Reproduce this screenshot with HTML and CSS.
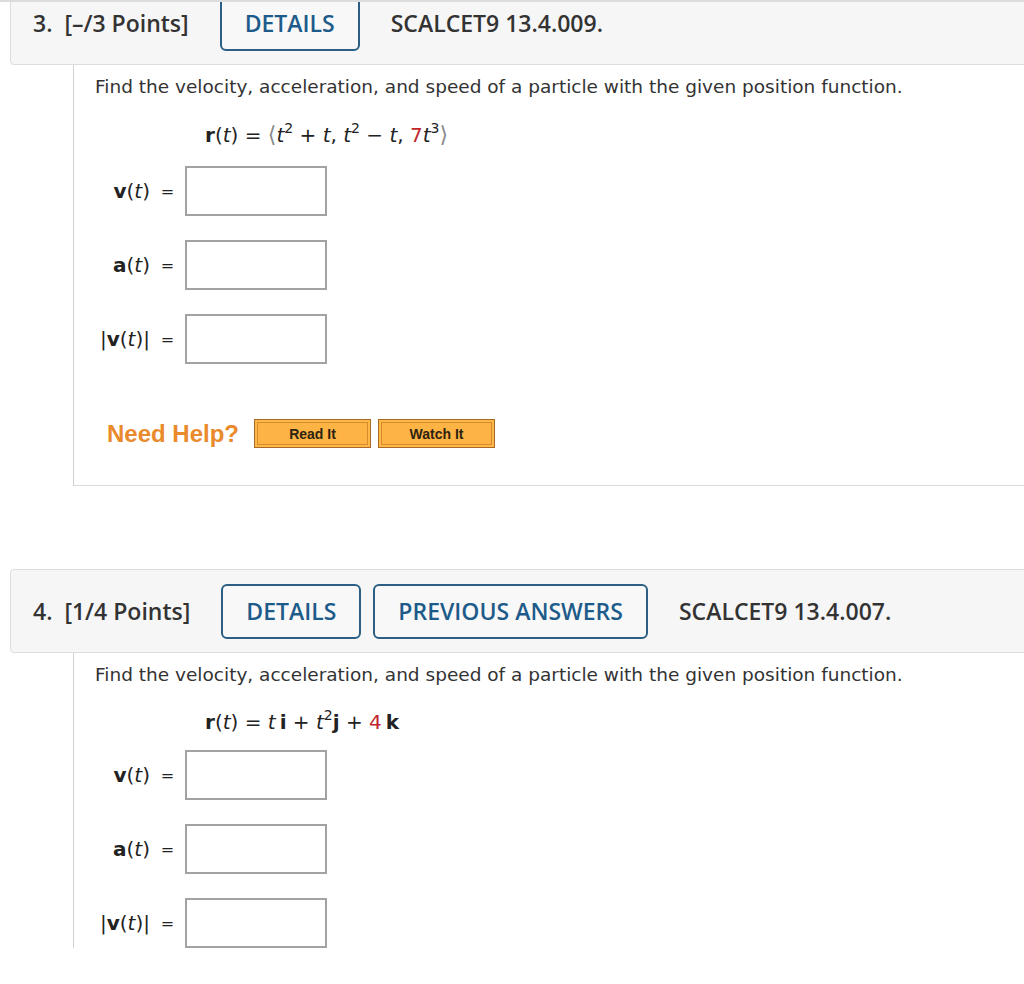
FILE: index.html
```html
<!DOCTYPE html>
<html lang="en">
<head>
<meta charset="utf-8">
<title>Questions</title>
<link rel="stylesheet" href="styles.css">
</head>
<body>
<div class="topline"></div>
<main class="page">
  <section class="question q3">
    <header class="qhead">
      <span class="qnum">3.&nbsp; [&ndash;/3 Points]</span>
      <span class="btn first">DETAILS</span>
      <span class="qid">SCALCET9 13.4.009.</span>
    </header>
    <div class="qbody closed">
      <p class="prompt">Find the velocity, acceleration, and speed of a particle with the given position function.</p>
      <div class="formula f3"><b>r</b>(<i>t</i>) = <span class="ang">&#10216;</span><i>t</i><sup>2</sup> + <i>t</i>, <i>t</i><sup>2</sup> &minus; <i>t</i>, <span class="red">7</span><i>t</i><sup>3</sup><span class="ang">&#10217;</span></div>
      <div class="answers">
        <div class="row"><span class="label"><b>v</b>(<i>t</i>)</span><span class="eq">=</span><span class="box"></span></div>
        <div class="row"><span class="label"><b>a</b>(<i>t</i>)</span><span class="eq">=</span><span class="box"></span></div>
        <div class="row"><span class="label">|<b>v</b>(<i>t</i>)|</span><span class="eq">=</span><span class="box"></span></div>
      </div>
      <div class="help">
        <span class="need">Need Help?</span>
        <span class="hbtn">Read It</span>
        <span class="hbtn">Watch It</span>
      </div>
    </div>
  </section>

  <section class="question q4">
    <header class="qhead">
      <span class="qnum">4.&nbsp; [1/4 Points]</span>
      <span class="btn first">DETAILS</span>
      <span class="btn">PREVIOUS ANSWERS</span>
      <span class="qid">SCALCET9 13.4.007.</span>
    </header>
    <div class="qbody">
      <p class="prompt">Find the velocity, acceleration, and speed of a particle with the given position function.</p>
      <div class="formula f4"><b>r</b>(<i>t</i>) = <i>t</i>&thinsp;<b>i</b> + <i>t</i><sup>2</sup><b>j</b> + <span class="red">4</span>&thinsp;<b>k</b></div>
      <div class="answers">
        <div class="row"><span class="label"><b>v</b>(<i>t</i>)</span><span class="eq">=</span><span class="box"></span></div>
        <div class="row"><span class="label"><b>a</b>(<i>t</i>)</span><span class="eq">=</span><span class="box"></span></div>
        <div class="row"><span class="label">|<b>v</b>(<i>t</i>)|</span><span class="eq">=</span><span class="box"></span></div>
      </div>
    </div>
  </section>
</main>
</body>
</html>
```

FILE: styles.css
```css
html, body {
  margin: 0;
  padding: 0;
  background: #ffffff;
  overflow: hidden;
}

body {
  font-family: "Open Sans", "DejaVu Sans", sans-serif;
  color: #333333;
}

.topline {
  position: fixed;
  top: 0;
  left: 0;
  right: 0;
  height: 2px;
  background: #dcdcdc;
  z-index: 5;
}

.page {
  width: 1040px;
}

.q3 {
  margin-top: -19px;
}

.q4 {
  margin-top: 83px;
}

.qhead {
  margin-left: 10px;
  height: 84px;
  box-sizing: border-box;
  border: 1px solid #dddddd;
  border-radius: 4px;
  background: #f6f6f6;
  display: flex;
  align-items: center;
  padding-left: 22px;
  font-size: 23px;
  font-weight: 600;
  color: #333333;
  white-space: nowrap;
}

.qnum {
  margin-right: 31px;
}

.btn {
  height: 55px;
  box-sizing: border-box;
  border: 2px solid #2b5f83;
  border-radius: 6px;
  padding: 0 23px;
  display: flex;
  align-items: center;
  color: #1d5b8a;
  background: #f8f8f8;
  margin-right: 12px;
}

.qid {
  margin-left: 19px;
}

.qbody {
  margin-left: 73px;
  border-left: 1px solid #d2d2d2;
  padding-left: 21px;
  padding-top: 10px;
}

.qbody.closed {
  border-bottom: 1px solid #dadada;
  padding-bottom: 37px;
}

.prompt {
  margin: 0;
  font-family: "DejaVu Sans", Verdana, sans-serif;
  font-size: 18.5px;
  line-height: 24px;
  color: #333333;
  white-space: nowrap;
}

.formula {
  margin: 22px 0 0 110px;
  font-family: "DejaVu Sans", Verdana, sans-serif;
  font-size: 20px;
  line-height: 28px;
  height: 28px;
  color: #222222;
  white-space: nowrap;
}

.formula.f3 {
  margin-bottom: 17px;
}

.formula.f4 {
  margin-top: 21px;
  margin-bottom: 14px;
}

.formula sup {
  font-size: 14px;
  line-height: 0;
  vertical-align: 9px;
}

.formula .ang {
  color: #8a8a8a;
  font-size: 22px;
}

.red {
  color: #c0262c;
}

.answers {
  display: flex;
  flex-direction: column;
  gap: 24px;
}

.row {
  display: flex;
  align-items: center;
  height: 50px;
  font-family: "DejaVu Sans", Verdana, sans-serif;
  font-size: 20px;
  color: #222222;
}

.label {
  width: 55px;
  text-align: right;
  white-space: nowrap;
}

.eq {
  width: 35px;
  text-align: center;
  font-size: 16px;
}

.box {
  width: 142px;
  height: 50px;
  box-sizing: border-box;
  border: 2px solid #a2a2a2;
  background: #ffffff;
}

.help {
  margin-top: 55px;
  padding-left: 12px;
  display: flex;
  align-items: center;
  height: 29px;
}

.need {
  font-family: "Liberation Sans", Arial, sans-serif;
  font-weight: 700;
  font-size: 24px;
  color: #e98a2c;
  margin-right: 15px;
}

.hbtn {
  width: 117px;
  height: 29px;
  box-sizing: border-box;
  border: 1px solid #a86a24;
  box-shadow: inset 0 0 0 2px #fdb849, inset 0 0 0 3px #d98a2c;
  background: #fdb445;
  display: flex;
  align-items: center;
  justify-content: center;
  font-family: "Liberation Sans", Arial, sans-serif;
  font-weight: 700;
  font-size: 14px;
  color: #2e2210;
  margin-right: 7px;
}
```
